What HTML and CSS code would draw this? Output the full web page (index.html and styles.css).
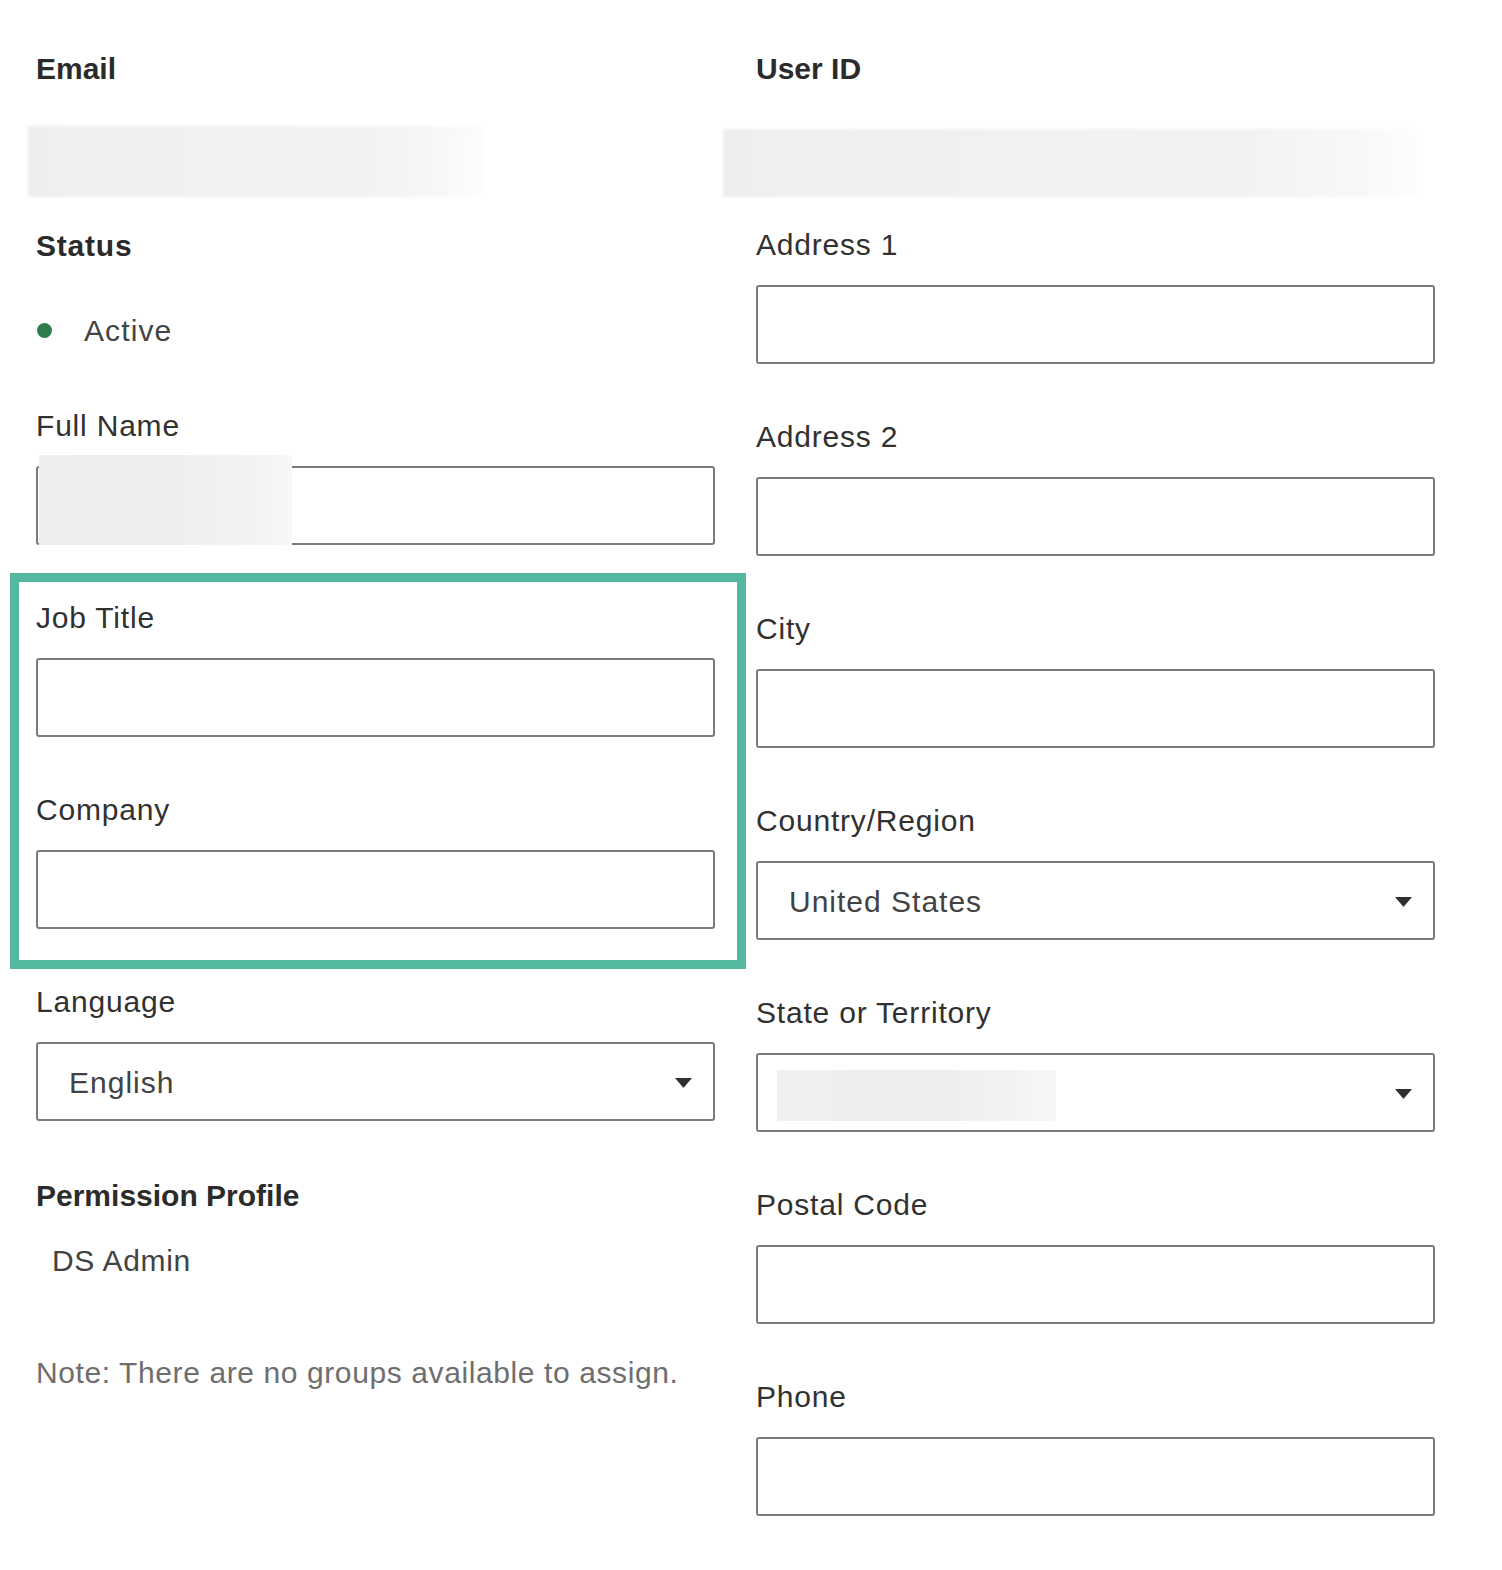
FILE: index.html
```html
<!DOCTYPE html>
<html lang="en">
<head>
<meta charset="utf-8">
<title>User Profile</title>
<link rel="stylesheet" href="styles.css">
</head>
<body>
<div class="page">
  <div class="col">
    <div class="label bold">Email</div>
    <div class="redact redact-email"></div>
    <div class="label bold status-label">Status</div>
    <div class="status-row"><span class="dot"></span><span class="status-text">Active</span></div>

    <div class="field field-name">
      <div class="label">Full Name</div>
      <div class="input has-redact"><div class="redact redact-name"></div></div>
    </div>

    <div class="highlight">
      <div class="field">
        <div class="label">Job Title</div>
        <div class="input"></div>
      </div>
      <div class="field next">
        <div class="label">Company</div>
        <div class="input"></div>
      </div>
    </div>

    <div class="field field-lang">
      <div class="label">Language</div>
      <div class="input select">
        <span class="select-value">English</span>
        <svg class="caret" width="19" height="11" viewBox="0 0 19 11"><path d="M1 1 L18 1 L10.1 10.2 Q9.5 10.9 8.9 10.2 Z" fill="#2f2f2f"/></svg>
      </div>
    </div>

    <div class="label bold perm-label">Permission Profile</div>
    <div class="perm-value">DS Admin</div>
    <div class="note">Note: There are no groups available to assign.</div>
  </div>

  <div class="col">
    <div class="label bold">User ID</div>
    <div class="redact redact-id"></div>

    <div class="field first">
      <div class="label">Address 1</div>
      <div class="input"></div>
    </div>
    <div class="field next">
      <div class="label">Address 2</div>
      <div class="input"></div>
    </div>
    <div class="field next">
      <div class="label">City</div>
      <div class="input"></div>
    </div>
    <div class="field next">
      <div class="label">Country/Region</div>
      <div class="input select">
        <span class="select-value">United States</span>
        <svg class="caret" width="19" height="11" viewBox="0 0 19 11"><path d="M1 1 L18 1 L10.1 10.2 Q9.5 10.9 8.9 10.2 Z" fill="#2f2f2f"/></svg>
      </div>
    </div>
    <div class="field next">
      <div class="label">State or Territory</div>
      <div class="input select select-redacted">
        <div class="redact redact-state"></div>
        <svg class="caret" width="19" height="11" viewBox="0 0 19 11"><path d="M1 1 L18 1 L10.1 10.2 Q9.5 10.9 8.9 10.2 Z" fill="#2f2f2f"/></svg>
      </div>
    </div>
    <div class="field next">
      <div class="label">Postal Code</div>
      <div class="input"></div>
    </div>
    <div class="field next">
      <div class="label">Phone</div>
      <div class="input"></div>
    </div>
  </div>
</div>
</body>
</html>
```

FILE: styles.css
```css
html, body {
  margin: 0;
  padding: 0;
  background: #ffffff;
}

body {
  font-family: "Liberation Sans", Arial, sans-serif;
  color: #333333;
  width: 1502px;
  height: 1570px;
  overflow: hidden;
}

.page {
  display: grid;
  grid-template-columns: 679px 679px;
  column-gap: 41px;
  padding: 51px 0 0 36px;
  align-items: start;
}

.col {
  display: flex;
  flex-direction: column;
}

.label {
  font-size: 30px;
  line-height: 36px;
  height: 36px;
  color: #313131;
  letter-spacing: 0.8px;
  white-space: nowrap;
}

.label.bold {
  font-weight: 700;
  color: #2b2b2b;
  letter-spacing: 0;
}

.status-label.bold {
  letter-spacing: 0.8px;
}

.field {
  display: flex;
  flex-direction: column;
}

.field .label {
  margin-bottom: 22px;
}

.field.first {
  margin-top: 30px;
}

.field.next {
  margin-top: 55px;
}

.input {
  height: 79px;
  box-sizing: border-box;
  border: 2px solid #7b7b7b;
  border-radius: 3px;
  background: #ffffff;
}

.select {
  display: flex;
  align-items: center;
  justify-content: space-between;
  padding: 0 20px 0 31px;
}

.select-redacted {
  padding-left: 19px;
}

.select-value {
  font-size: 30px;
  line-height: 36px;
  color: #424242;
  letter-spacing: 1px;
  margin-top: 2px;
}

.caret {
  display: block;
  margin-top: 2px;
}

/* redacted (blurred) regions */
.redact {
  background: linear-gradient(90deg, #eeeeef 0%, #f1f1f2 45%, #f2f2f3 75%, #f7f7f7 90%, #fdfdfd 100%);
  filter: blur(1.5px);
}

.redact-email {
  margin-top: 39px;
  margin-left: -8px;
  width: 456px;
  height: 71px;
  align-self: flex-start;
}

.redact-id {
  margin-top: 42px;
  margin-left: -33px;
  width: 695px;
  height: 68px;
  align-self: flex-start;
}

.has-redact {
  position: relative;
}

.redact-name {
  position: absolute;
  left: 1px;
  top: -13px;
  width: 253px;
  height: 90px;
  filter: none;
  background: linear-gradient(90deg, #efeff0 0%, #eeeeef 50%, #f3f3f3 85%, #f8f8f8 100%);
}

.redact-state {
  width: 279px;
  height: 51px;
  margin-top: 6px;
  filter: none;
  background: linear-gradient(90deg, #f0f0f1 0%, #ededee 55%, #f3f3f3 85%, #f7f7f7 100%);
}

.status-label {
  margin-top: 31px;
}

.status-row {
  margin-top: 49px;
  height: 36px;
  display: flex;
  align-items: center;
}

.dot {
  width: 15px;
  height: 15px;
  border-radius: 50%;
  background: #2f7d4c;
  margin-left: 1px;
  margin-top: -2px;
}

.status-text {
  font-size: 30px;
  line-height: 36px;
  color: #444444;
  letter-spacing: 1.1px;
  margin-left: 32px;
}

.field-name {
  margin-top: 59px;
}

.highlight {
  margin: 28px -31px 0 -26px;
  border: 9px solid #53b89f;
  padding: 18px 22px 31px 17px;
  display: flex;
  flex-direction: column;
}

.field-lang {
  margin-top: 15px;
}

.perm-label {
  margin-top: 57px;
}

.perm-value {
  margin-top: 29px;
  padding-left: 16px;
  font-size: 30px;
  line-height: 36px;
  color: #424242;
  letter-spacing: 0.7px;
}

.note {
  margin-top: 76px;
  font-size: 30px;
  line-height: 36px;
  color: #6e6e6e;
  letter-spacing: 0.6px;
  white-space: nowrap;
}
```
